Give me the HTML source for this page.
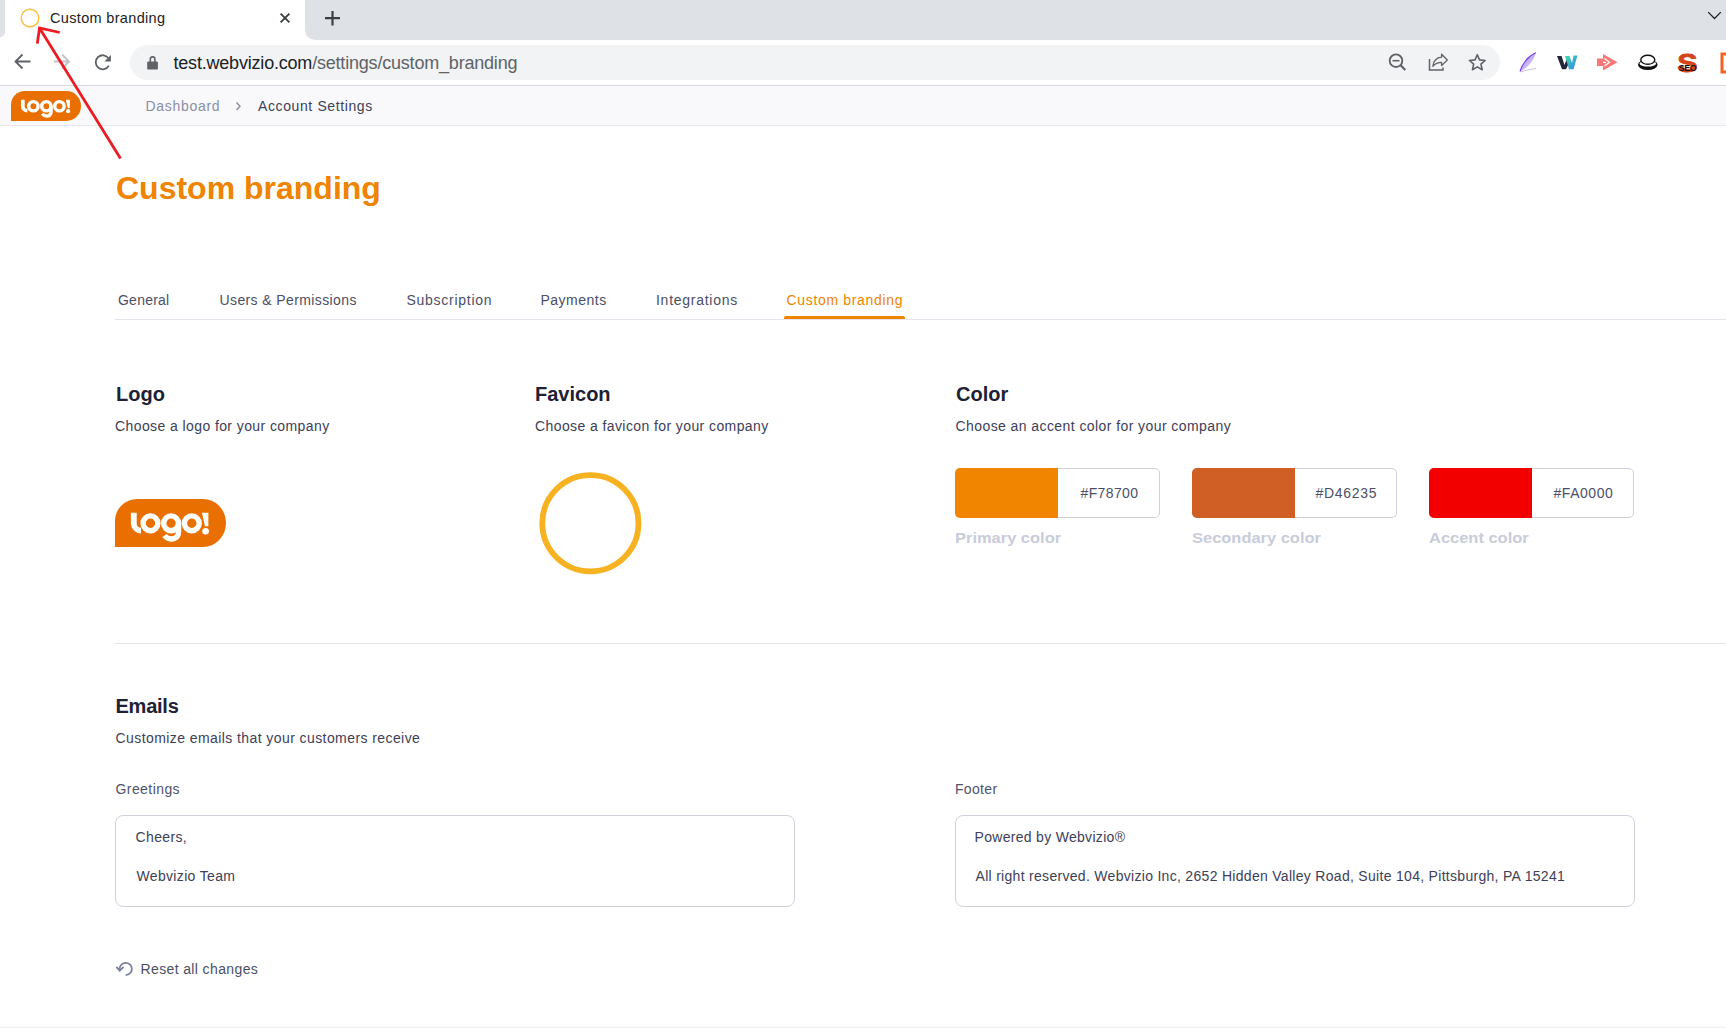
<!DOCTYPE html>
<html><head><meta charset="utf-8">
<style>
*{margin:0;padding:0;box-sizing:border-box}
html,body{width:1726px;height:1028px;overflow:hidden;background:#fff;font-family:"Liberation Sans",sans-serif}
body{position:relative}
.a{position:absolute;white-space:nowrap;line-height:1}
svg{position:absolute;overflow:visible}
.t{color:#1e2135}
.sub{color:#3d4058;font-size:14px}
.tabs{font-size:14px;color:#4b4f66}
.lbl{font-size:15px;font-weight:bold;color:#c9ccda}
.hex{font-size:14px;color:#4b4f66}
.sw{position:absolute;top:468px;width:205px;height:50px;border:1px solid #cfd2de;border-radius:5px;overflow:hidden;background:#fff}
.swc{position:absolute;top:468px;width:103px;height:50px;border-radius:5px 0 0 5px}
.ta{position:absolute;top:815px;width:680px;height:92px;border:1px solid #cfd2de;border-radius:8px}
</style></head><body>
<!-- browser tab strip -->
<div class="a" style="left:0;top:0;width:5px;height:37px;background:#dee1e6;border-bottom-right-radius:5px"></div>
<div class="a" style="left:305px;top:0;width:1421px;height:40px;background:#dee1e6;border-bottom-left-radius:10px"></div>
<svg style="left:0;top:0" width="1726" height="90">
  <circle cx="30" cy="18" r="8.8" fill="none" stroke="#fbbd3c" stroke-width="1.4"/>
  <path d="M280.6,13.6 L289.4,22.4 M289.4,13.6 L280.6,22.4" stroke="#3c4043" stroke-width="1.9"/>
  <path d="M332.5,11 V25.5 M325,18.2 H340" stroke="#3c4043" stroke-width="2.2"/>
  <path d="M1708.2,12.1 L1714.5,18.5 L1720.8,12.1" fill="none" stroke="#202124" stroke-width="1.3"/>
  <!-- toolbar -->
  <path d="M30.5,61.5 H15.5 M22.5,54.5 L15.5,61.5 L22.5,68.5" fill="none" stroke="#5f6368" stroke-width="1.8"/>
  <path d="M54,61.5 H69 M62,54.5 L69,61.5 L62,68.5" fill="none" stroke="#c0c3c8" stroke-width="1.8"/>
  <g transform="translate(-0.6,1.1)"><path d="M109.5,64.5 A7,7 0 1 1 109.3,57.5" fill="none" stroke="#5f6368" stroke-width="1.8"/>
  <path d="M111.5,54 V60.5 H105 Z" fill="#5f6368"/></g>
</svg>
<div class="a" style="left:0;top:85px;width:1726px;height:1px;background:#d7d9dd"></div>
<div class="a" style="left:130px;top:45px;width:1370px;height:35px;background:#f1f3f4;border-radius:17.5px"></div>
<svg style="left:0;top:0" width="1726" height="90">
  <path d="M150.3,62 V59.2 A2.3,2.3 0 0 1 154.9,59.2 V62" fill="none" stroke="#5f6368" stroke-width="1.6"/>
  <rect x="147.2" y="61.4" width="10.7" height="8.2" rx="1.2" fill="#5f6368"/>
  <circle cx="1396" cy="60.7" r="6.3" fill="none" stroke="#5f6368" stroke-width="1.8"/>
  <path d="M1392.5,60.7 H1399.5" stroke="#5f6368" stroke-width="1.6"/>
  <path d="M1400.6,65.3 L1405.3,70" stroke="#5f6368" stroke-width="2.2"/>
  <path d="M1429.5,59 V70 H1443 V67.5" fill="none" stroke="#5f6368" stroke-width="1.5"/>
  <path d="M1432.8,66.3 C1433.6,60.5 1436.8,57.6 1441.6,57.2 V54.2 L1447.3,60 L1441.6,65.6 V62.4 C1437.8,62.4 1435.2,63.6 1432.8,66.3 Z" fill="none" stroke="#5f6368" stroke-width="1.3" stroke-linejoin="round"/>
  <path d="M1477.30,54.70 L1479.54,59.91 L1485.19,60.44 L1480.93,64.18 L1482.18,69.71 L1477.30,66.82 L1472.42,69.71 L1473.67,64.18 L1469.41,60.44 L1475.06,59.91 Z" fill="none" stroke="#5f6368" stroke-width="1.6" stroke-linejoin="round"/>
  <!-- extensions -->
  <defs>
    <linearGradient id="fg" x1="0" y1="0" x2="1" y2="1"><stop offset="0" stop-color="#a78bfa"/><stop offset="0.5" stop-color="#c4b5fd"/><stop offset="1" stop-color="#e9d5ff"/></linearGradient>
    <linearGradient id="wg" x1="0" y1="0" x2="1" y2="1"><stop offset="0" stop-color="#3ee0a0"/><stop offset="1" stop-color="#3b82f6"/></linearGradient>
  </defs>
  <path d="M1520,71.5 C1522,64 1528,56 1535.8,52.8 C1534,60 1529,67 1520,71.5 Z" fill="url(#fg)"/>
  <path d="M1520,71.5 C1522,64 1528,56 1535.8,52.8" fill="none" stroke="#7c3aed" stroke-width="1.1"/>
  <path d="M1521,72 C1525,70 1531,69.5 1536,68.5" fill="none" stroke="#c9c5d6" stroke-width="1"/>
  <path d="M1557,56 H1561.5 L1564.5,65 L1567,58 L1569,63 L1566,69.3 H1562 Z" fill="#23253d"/>
  <path d="M1565,56 H1569.5 L1572,63 L1573.5,55.5 H1577.5 L1573.5,69.3 H1569 Z" fill="url(#wg)"/>
  <path d="M1597,58.5 H1603 V54 L1617.5,62.3 L1603,70.6 V66 H1597 Z" fill="#f87878"/>
  <path d="M1604.5,58.5 L1609.5,62.3 L1604.5,66 M1603,62.3 H1606" fill="none" stroke="#fff" stroke-width="1.3"/>
  <ellipse cx="1647.8" cy="64.8" rx="9.8" ry="5.2" fill="#111"/>
  <ellipse cx="1647.8" cy="63.6" rx="8.3" ry="3" fill="#fff"/>
  <ellipse cx="1647.8" cy="59.8" rx="7" ry="4.5" fill="#fff" stroke="#111" stroke-width="1.4"/>
  <text transform="translate(1687.5,71.6) scale(1.22,1)" x="0" y="0" font-family="Liberation Sans" font-weight="bold" font-size="25" text-anchor="middle" fill="#d5441a" stroke="#d5441a" stroke-width="0.8">S</text>
  <text x="1687.5" y="71" font-family="Liberation Sans" font-weight="bold" font-size="9" text-anchor="middle" fill="#111" letter-spacing="-0.4">SEO</text>
  <path d="M1726,54 H1722 V72 H1726" fill="none" stroke="#f26322" stroke-width="3"/>
</svg>
<div class="a" id="tabtitle" style="left:50.00px;top:11.00px;letter-spacing:0.329px;font-size:14.5px;color:#202124">Custom branding</div>
<div class="a" id="url" style="left:173.50px;top:53.66px;letter-spacing:-0.200px;font-size:18px;color:#202124;">test.webvizio.com<span style="color:#5f6368">/settings/custom_branding</span></div>

<!-- app header -->
<div class="a" style="left:0;top:86px;width:1726px;height:39px;background:#f9f9fb"></div>
<div class="a" style="left:0;top:125px;width:1726px;height:1px;background:#e6e7ee"></div>
<svg style="left:11px;top:91px" width="70" height="30" viewBox="0 0 111 48" preserveAspectRatio="none">
  <g id="logoG">
  <path d="M0,48 V22 A22,22 0 0 1 22,0 H88 A23,24 0 0 1 111,24 A23,24 0 0 1 88,48 Z" fill="#e97000"/>
  <path d="M15.9,13.8 H21.7 V24.4 A4.3,4.3 0 0 0 26,28.7 V34.4 A10.1,10 0 0 1 15.9,24.4 Z" fill="#fff"/>
  <circle cx="35.5" cy="24.3" r="7.4" fill="none" stroke="#fff" stroke-width="5.4"/>
  <circle cx="56.1" cy="24.3" r="7.4" fill="none" stroke="#fff" stroke-width="5.4"/>
  <path d="M63.5,24 V33 C63.5,38 60,40 56.1,40 C53,40 51,38.5 49.5,36.5" fill="none" stroke="#fff" stroke-width="5.4"/>
  <circle cx="76.8" cy="24.3" r="7.4" fill="none" stroke="#fff" stroke-width="5.4"/>
  <path d="M87,13.8 H93.4 V27 L90,27.6 Z" fill="#fff"/>
  <circle cx="90.6" cy="32.2" r="3.3" fill="#fff"/>
  </g>
</svg>
<div class="a" id="bc1" style="left:145.50px;top:98.95px;letter-spacing:0.700px;font-size:14px;color:#8a8fa6">Dashboard</div>
<svg style="left:0;top:0" width="400" height="130"><path d="M236.5,102.5 L240,106.3 L236.5,110" fill="none" stroke="#8a8fa6" stroke-width="1.4"/></svg>
<div class="a" id="bc2" style="left:258.00px;top:98.95px;letter-spacing:0.613px;font-size:14px;color:#3d4159">Account Settings</div>

<div class="a" id="title" style="left:116.00px;top:172.41px;letter-spacing:0.000px;font-size:32px;font-weight:bold;color:#f08300">Custom branding</div>

<div class="a tabs" id="tb1" style="left:118.00px;top:293.45px;letter-spacing:0.233px;">General</div>
<div class="a tabs" id="tb2" style="left:219.50px;top:293.45px;letter-spacing:0.389px;">Users &amp; Permissions</div>
<div class="a tabs" id="tb3" style="left:406.50px;top:293.45px;letter-spacing:0.727px;">Subscription</div>
<div class="a tabs" id="tb4" style="left:540.50px;top:293.45px;letter-spacing:0.486px;">Payments</div>
<div class="a tabs" id="tb5" style="left:656.00px;top:293.45px;letter-spacing:0.727px;">Integrations</div>
<div class="a tabs" id="tb6" style="left:786.50px;top:293.45px;letter-spacing:0.671px;color:#f08300">Custom branding</div>
<div class="a" style="left:115px;top:319px;width:1611px;height:1px;background:#e4e5ec"></div>
<div class="a" style="left:784px;top:316px;width:121px;height:3px;background:#f08300;border-radius:2px 2px 0 0"></div>

<div class="a t" id="h1" style="left:116.00px;top:384.07px;letter-spacing:0.000px;font-size:20px;font-weight:bold">Logo</div>
<div class="a sub" id="s1" style="left:115.00px;top:419.15px;letter-spacing:0.407px;">Choose a logo for your company</div>
<div class="a t" id="h2" style="left:535.00px;top:384.07px;letter-spacing:0.000px;font-size:20px;font-weight:bold">Favicon</div>
<div class="a sub" id="s2" style="left:535.00px;top:419.15px;letter-spacing:0.406px;">Choose a favicon for your company</div>
<div class="a t" id="h3" style="left:956.00px;top:384.07px;letter-spacing:0.000px;font-size:20px;font-weight:bold">Color</div>
<div class="a sub" id="s3" style="left:955.50px;top:419.15px;letter-spacing:0.421px;">Choose an accent color for your company</div>

<svg style="left:115px;top:499px" width="111" height="48" viewBox="0 0 111 48"><use href="#logoG"/></svg>
<svg style="left:0;top:0" width="1726" height="600"><circle cx="590.4" cy="523.2" r="48.1" fill="none" stroke="#f6b220" stroke-width="5.8"/></svg>

<div class="sw" style="left:955px"></div><div class="swc" style="left:955px;background:#f28500"></div>
<div class="sw" style="left:1192px"></div><div class="swc" style="left:1192px;background:#cf5f25"></div>
<div class="sw" style="left:1429px"></div><div class="swc" style="left:1429px;background:#f20000"></div>
<div class="a hex" id="x1" style="left:1080.50px;top:486.15px;letter-spacing:0.367px;">#F78700</div>
<div class="a hex" id="x2" style="left:1315.50px;top:486.15px;letter-spacing:0.700px;">#D46235</div>
<div class="a hex" id="x3" style="left:1553.50px;top:486.15px;letter-spacing:0.533px;">#FA0000</div>
<div class="a lbl" id="l1" style="left:954.80px;letter-spacing:0px;transform:scaleX(1.097);transform-origin:0 0;top:529.90px;">Primary color</div>
<div class="a lbl" id="l2" style="left:1191.80px;letter-spacing:0px;transform:scaleX(1.097);transform-origin:0 0;top:529.90px;">Secondary color</div>
<div class="a lbl" id="l3" style="left:1428.80px;letter-spacing:0px;transform:scaleX(1.097);transform-origin:0 0;top:529.90px;">Accent color</div>

<div class="a" style="left:115px;top:643px;width:1611px;height:1px;background:#e4e5ec"></div>
<div class="a t" id="h4" style="left:115.50px;top:696.27px;letter-spacing:-0.240px;font-size:20px;font-weight:bold">Emails</div>
<div class="a sub" id="s4" style="left:115.50px;top:730.95px;letter-spacing:0.419px;">Customize emails that your customers receive</div>
<div class="a sub" id="g1" style="left:115.50px;top:782.05px;letter-spacing:0.425px;color:#4f536b">Greetings</div>
<div class="a sub" id="g2" style="left:955.00px;top:782.05px;letter-spacing:0.320px;color:#4f536b">Footer</div>
<div class="ta" style="left:115px"></div>
<div class="ta" style="left:955px"></div>
<div class="a sub" id="c1" style="left:135.50px;top:830.15px;letter-spacing:0.367px;">Cheers,</div>
<div class="a sub" id="c2" style="left:136.50px;top:869.05px;letter-spacing:0.333px;">Webvizio Team</div>
<div class="a sub" id="f1" style="left:974.50px;top:830.15px;letter-spacing:0.305px;">Powered by Webvizio®</div>
<div class="a sub" id="f2" style="left:975.50px;top:868.95px;letter-spacing:0.299px;">All right reserved. Webvizio Inc, 2652 Hidden Valley Road, Suite 104, Pittsburgh, PA 15241</div>
<svg style="left:0;top:0" width="300" height="1000">
  <path d="M119.7,969.6 A6.1,6.1 0 1 1 125.7,975" fill="none" stroke="#7d8199" stroke-width="1.8"/>
  <path d="M116.3,966.9 L119.7,970.6 L123.6,966.9" fill="none" stroke="#7d8199" stroke-width="1.9"/>
</svg>
<div class="a sub" id="r1" style="left:140.50px;top:962.05px;letter-spacing:0.375px;color:#4b4f66">Reset all changes</div>
<div class="a" style="left:0;top:1027px;width:1726px;height:1px;background:#ebebeb"></div>

<!-- annotation arrow -->
<svg style="left:0;top:0" width="200" height="200">
  <path d="M120.5,158.5 L39.5,28 M59.7,32.5 L39.5,28 L37.3,43.6" fill="none" stroke="#ec1c24" stroke-width="2.8" stroke-linejoin="miter"/>
</svg>
</body></html>
